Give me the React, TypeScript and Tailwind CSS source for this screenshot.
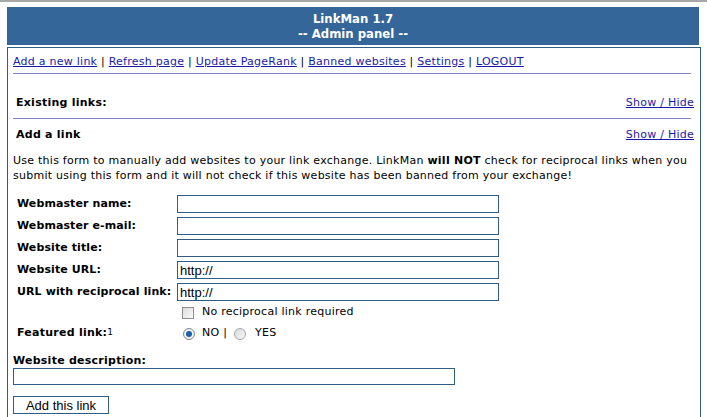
export default function App() {
  const rows = [
    { label: "Webmaster name:", value: "" },
    { label: "Webmaster e-mail:", value: "" },
    { label: "Website title:", value: "" },
    { label: "Website URL:", value: "http://" },
    { label: "URL with reciprocal link:", value: "http://" },
  ];

  return (
    <div className="min-h-screen bg-white border-t-2 border-[#a8a8a8] px-[7px] pt-[5px] font-['DejaVu_Sans',Verdana,sans-serif] text-[11px] tracking-[0.25px] text-black">
      <div className="h-[38px] bg-[#346699] text-white font-bold text-center flex flex-col justify-center leading-[15px] text-[13px] tracking-normal font-['DejaVu_Sans_Condensed','Liberation_Sans_Narrow',sans-serif] mr-px">
        <div>LinkMan 1.7</div>
        <div>-- Admin panel --</div>
      </div>

      <div className="mt-[2px] -mr-px border border-[#2f5d86] px-[5px] pt-[7px] pb-[40px]">
        <div className="leading-[14px]">
          <a href="#" className="text-[#1a1aa8] underline">Add a new link</a> |{" "}
          <a href="#" className="text-[#1a1aa8] underline">Refresh page</a> |{" "}
          <a href="#" className="text-[#1a1aa8] underline">Update PageRank</a> |{" "}
          <a href="#" className="text-[#1a1aa8] underline">Banned websites</a> |{" "}
          <a href="#" className="text-[#1a1aa8] underline">Settings</a> |{" "}
          <a href="#" className="text-[#1a1aa8] underline">LOGOUT</a>
        </div>
        <div className="mt-[4px] mr-[4px] h-px bg-[#8383c4]" />

        <div className="mt-[22px] flex justify-between leading-[14px] pl-[3px] pr-[1px]">
          <b>Existing links:</b>
          <a href="#" className="text-[#1a1aa8] underline">Show / Hide</a>
        </div>
        <div className="mt-[8px] mr-[4px] h-px bg-[#8383c4]" />

        <div className="mt-[9px] flex justify-between leading-[14px] pl-[3px] pr-[1px]">
          <b>Add a link</b>
          <a href="#" className="text-[#1a1aa8] underline">Show / Hide</a>
        </div>

        <p className="mt-[11px] leading-[15px]">
          Use this form to manually add websites to your link exchange. LinkMan <b>will NOT</b> check for
          reciprocal links when you submit using this form and it will not check if this website has been
          banned from your exchange!
        </p>

        <div className="mt-[10px] flex flex-col pl-[4px]">
          {rows.map((r) => (
            <div key={r.label} className="h-[22px] flex items-center">
              <div className="w-[160px] shrink-0 font-bold whitespace-nowrap tracking-[0.1px]">{r.label}</div>
              <div className="w-[322px] h-[18px] border border-[#2f5d86] bg-white pl-[2px] flex items-center font-['Liberation_Sans',Arial,sans-serif] text-[13px] tracking-normal leading-none">
                {r.value}
              </div>
            </div>
          ))}
          <div className="h-[19px] flex items-center">
            <div className="w-[165px] shrink-0" />
            <span className="w-[12px] h-[12px] border border-[#8e8f8f] bg-gradient-to-br from-[#dcdcdc] to-[#fbfbfb] shrink-0" />
            <span className="ml-[8px]">No reciprocal link required</span>
          </div>
          <div className="h-[23px] flex items-center">
            <div className="w-[166px] shrink-0 font-bold">
              Featured link:<sup className="font-normal text-[9px] relative -top-[1px]">1</sup>
            </div>
            <span className="w-[12px] h-[12px] rounded-full border border-[#7f8a94] bg-[#eef2f6] flex items-center justify-center shrink-0">
              <span className="w-[6px] h-[6px] rounded-full bg-[#1f5fa6]" />
            </span>
            <span className="ml-[7px]">NO |</span>
            <span className="ml-[7px] w-[12px] h-[12px] rounded-full border border-[#a3a7ab] bg-gradient-to-br from-[#d8d8d8] to-[#fafafa] shrink-0" />
            <span className="ml-[9px]">YES</span>
          </div>
        </div>

        <div className="mt-[9px] font-bold leading-[14px]">Website description:</div>
        <div className="w-[442px] h-[17px] border border-[#2f5d86] bg-white" />

        <button className="mt-[11px] w-[96px] h-[18px] border border-[#2f5d86] bg-white font-['Liberation_Sans',Arial,sans-serif] text-[13px] tracking-normal leading-none flex items-center justify-center">
          Add this link
        </button>
      </div>
    </div>
  );
}
